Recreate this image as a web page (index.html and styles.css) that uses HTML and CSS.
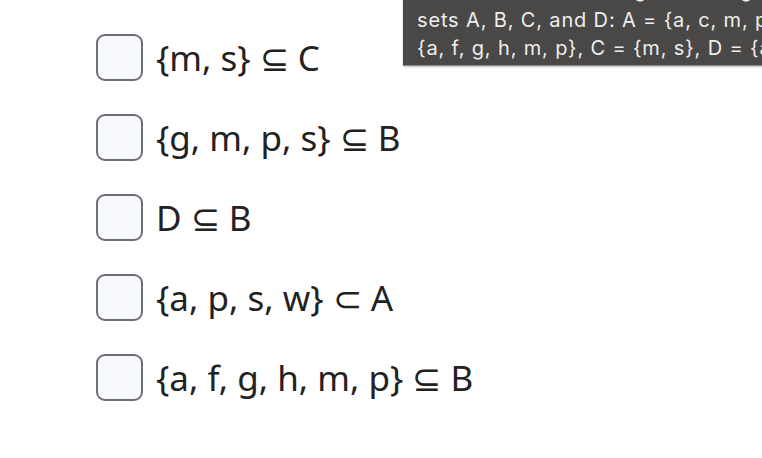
FILE: index.html
```html
<!DOCTYPE html>
<html>
<head>
<meta charset="utf-8">
<link rel="stylesheet" href="styles.css">
</head>
<body>
<div class="options">
  <label class="option"><span class="box"></span><span class="txt">{m, s} ⊆ C</span></label>
  <label class="option"><span class="box"></span><span class="txt">{g, m, p, s} ⊆ B</span></label>
  <label class="option"><span class="box"></span><span class="txt">D ⊆ B</span></label>
  <label class="option"><span class="box"></span><span class="txt">{a, p, s, w} ⊂ A</span></label>
  <label class="option"><span class="box"></span><span class="txt">{a, f, g, h, m, p} ⊆ B</span></label>
</div>
<div class="tooltip">
  <div class="tline">Which of the following are true given the</div>
  <div class="tline">sets A, B, C, and D: A = {a, c, m, p, s, w}, B =</div>
  <div class="tline">{a, f, g, h, m, p}, C = {m, s}, D = {a, f, g}</div>
</div>
</body>
</html>
```
FILE: styles.css
```css
html, body {
  margin: 0;
  padding: 0;
  background: #ffffff;
  overflow: hidden;
}
body {
  width: 762px;
  height: 458px;
  position: relative;
  font-family: "Noto Sans", "Open Sans", sans-serif;
  color: #222222;
}
.options {
  display: flex;
  flex-direction: column;
  gap: 33px;
  padding: 34px 0 0 96px;
}
.option {
  display: flex;
  align-items: center;
  gap: 13px;
  height: 47px;
}
.box {
  width: 43px;
  height: 43px;
  border: 2px solid #6c6f73;
  border-radius: 9px;
  background: #f8f9fe;
  flex: none;
}
.txt {
  font-size: 35px;
  line-height: 47px;
  white-space: nowrap;
}
.tooltip {
  position: absolute;
  left: 403px;
  top: -20px;
  width: 380px;
  height: 86px;
  background: #4a4846;
  border-bottom: 1px solid #8a8a8a;
  box-sizing: border-box;
  padding: 0 0 0 14px;
  color: #eeeeee;
  font-family: Inter, "Liberation Sans", Arial, sans-serif;
  font-size: 20px;
  letter-spacing: 0.85px;
  line-height: 28px;
  white-space: nowrap;
  overflow: hidden;
  box-shadow: 0 1px 2px rgba(0,0,0,0.25);
}
.tline {
  height: 28px;
}
.tline:first-child {
  margin-top: -4px;
  margin-bottom: 2px;
}
```
